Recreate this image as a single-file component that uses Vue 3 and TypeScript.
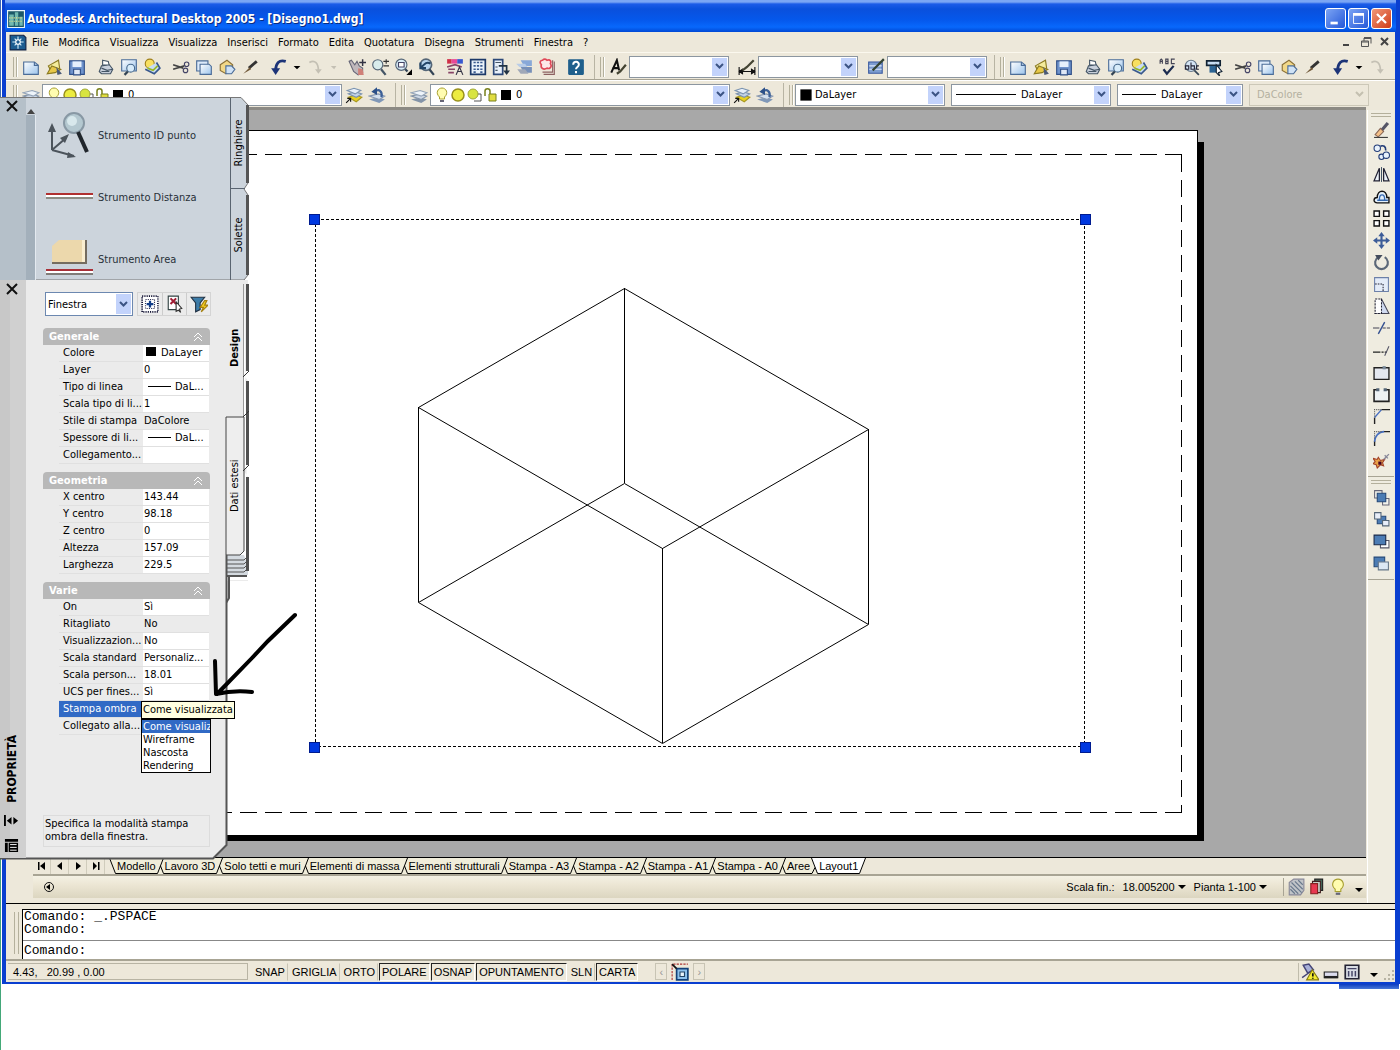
<script setup lang="ts">
import { h, ref } from 'vue'

const Icon = (p: { name: string }) =>
  h('svg', { class: 'icon', viewBox: '0 0 16 16', 'aria-hidden': 'true' }, [h('use', { href: '#i-' + p.name })])

const menus = ['File', 'Modifica', 'Visualizza', 'Visualizza', 'Inserisci', 'Formato', 'Edita', 'Quotatura', 'Disegna', 'Strumenti', 'Finestra', '?']

const standardGroups: string[][] = [
  ['new', 'open', 'save'],
  ['print', 'preview', 'publish'],
  ['cut', 'copy', 'paste', 'brush'],
  ['undo', 'more', 'redo', 'more-off'],
  ['pan', 'zoom', 'zoomwin', 'zoomprev'],
  ['props', 'center', 'palette', 'sheets', 'markup'],
  ['help'],
]
const secondGroups: string[][] = [
  ['new', 'open', 'save'],
  ['print', 'preview', 'publish'],
  ['spell', 'find', 'block'],
  ['cut', 'copy', 'paste', 'brush'],
  ['undo', 'more', 'redo'],
]
const styleBoxes = ['textstyle', 'dimstyle', 'tablestyle']
const layerStates = ['bulb', 'sun', 'sunvp', 'lock', 'swatch']

const modifyTools = ['erase', 'copyobj', 'mirror', 'offset', 'array', 'move', 'rotate', 'scale', 'stretch', 'trim', 'extend', 'breakpt', 'break', 'chamfer', 'fillet', 'explode']
const orderTools = ['order1', 'order2', 'order3', 'order4']

const sheetTabs = ['Modello', 'Lavoro 3D', 'Solo tetti e muri', 'Elementi di massa', 'Elementi strutturali', 'Stampa - A3', 'Stampa - A2', 'Stampa - A1', 'Stampa - A0', 'Aree', 'Layout1']
const activeSheet = ref('Layout1')

const modes = ref([
  { name: 'SNAP', on: false },
  { name: 'GRIGLIA', on: false },
  { name: 'ORTO', on: false },
  { name: 'POLARE', on: true },
  { name: 'OSNAP', on: true },
  { name: 'OPUNTAMENTO', on: true },
  { name: 'SLN', on: false },
  { name: 'CARTA', on: true },
])

interface Prop { name: string; value: string; mark?: 'swatch' | 'line'; locked?: boolean; active?: boolean }
const sections: { title: string; rows: Prop[] }[] = [
  {
    title: 'Generale',
    rows: [
      { name: 'Colore', value: 'DaLayer', mark: 'swatch' },
      { name: 'Layer', value: '0' },
      { name: 'Tipo di linea', value: 'DaL...', mark: 'line' },
      { name: 'Scala tipo di li...', value: '1' },
      { name: 'Stile di stampa', value: 'DaColore', locked: true },
      { name: 'Spessore di li...', value: 'DaL...', mark: 'line' },
      { name: 'Collegamento...', value: '' },
    ],
  },
  {
    title: 'Geometria',
    rows: [
      { name: 'X centro', value: '143.44' },
      { name: 'Y centro', value: '98.18' },
      { name: 'Z centro', value: '0' },
      { name: 'Altezza', value: '157.09' },
      { name: 'Larghezza', value: '229.5' },
    ],
  },
  {
    title: 'Varie',
    rows: [
      { name: 'On', value: 'Sì' },
      { name: 'Ritagliato', value: 'No', locked: true },
      { name: 'Visualizzazion...', value: 'No' },
      { name: 'Scala standard', value: 'Personaliz...' },
      { name: 'Scala person...', value: '18.01' },
      { name: 'UCS per fines...', value: 'Sì' },
      { name: 'Stampa ombra', value: '', active: true },
      { name: 'Collegato alla...', value: '', locked: true },
    ],
  },
]
const shadeOptions = ['Come visualizzata', 'Wireframe', 'Nascosta', 'Rendering']
const shade = ref('Come visualizzata')

const grips = [[314, 219], [1085, 219], [314, 747], [1085, 747]]
</script>

<template>
  <svg class="defs" width="0" height="0" aria-hidden="true">
    <defs>
      <linearGradient id="g-blue" x1="0" y1="0" x2="1" y2="1"><stop offset="0" stop-color="#fff" /><stop offset="1" stop-color="#9cc4ec" /></linearGradient>
      <symbol id="i-new" viewBox="0 0 16 16"><path d="M1.500 3.500h9.500l3.500 3v8h-13z" fill="url(#g-blue)" stroke="#4a6c98" /><path d="M11 3.500v3h3.500" fill="none" stroke="#4a6c98" /></symbol>
      <symbol id="i-open" viewBox="0 0 16 16"><path d="M3 7l9-5 1 7-7 4z" fill="#f4ec9c" stroke="#8b7a20" /><path d="M2 14l4-7 8 3-5 3z" fill="#e8c848" stroke="#8b7a20" /><path d="M10 8l5 6-4 1z" fill="#4a5a78" /></symbol>
      <symbol id="i-save" viewBox="0 0 16 16"><path d="M1.500 2.500h13v12h-13z" fill="#6f93cc" stroke="#2f4f88" /><path d="M4 3h8v5H4z" fill="#e6f0fc" /><path d="M5 10h6v5H5z" fill="#dfe8f6" stroke="#2f4f88" /></symbol>
      <symbol id="i-print" viewBox="0 0 16 16"><path d="M5 2l5 1 1 4-6-1z" fill="#fff" stroke="#456" /><path d="M4 7l7-1 3 4-2 4H4l-2-2z" fill="#c8d0dc" stroke="#456" /><path d="M4 9l5 2 5-1M4 12h7" fill="none" stroke="#456" /></symbol>
      <symbol id="i-preview" viewBox="0 0 16 16"><path d="M1.500 1.500h13v10h-13z" fill="url(#g-blue)" stroke="#4a6c98" /><circle cx="9.500" cy="9" r="3.500" fill="#d8ecfa" stroke="#48698c" /><path d="M7 12l-3 3" stroke="#345" stroke-width="2" /></symbol>
      <symbol id="i-publish" viewBox="0 0 16 16"><circle cx="6" cy="5" r="4" fill="#f8e060" stroke="#a08018" /><path d="M2 10l8 4 5-5-3-5" fill="#c8dcf4" stroke="#38588c" stroke-width="1.500" /><path d="M4 9l5 2 4-4" fill="none" stroke="#98b828" stroke-width="1.500" /></symbol>
      <symbol id="i-cut" viewBox="0 0 16 16"><path d="M1 6l9 3M1 10l10-3" stroke="#444" stroke-width="1.500" /><circle cx="13" cy="5.500" r="2" fill="none" stroke="#446" /><circle cx="12" cy="11" r="2" fill="none" stroke="#446" /></symbol>
      <symbol id="i-copy" viewBox="0 0 16 16"><path d="M1.500 2.500h10v9h-10z" fill="#dceafa" stroke="#4a6c98" /><path d="M4.500 5.500h8l2 2v7h-10z" fill="url(#g-blue)" stroke="#4a6c98" /></symbol>
      <symbol id="i-paste" viewBox="0 0 16 16"><path d="M2 6l6-4 5 4v6l-6 2-5-3z" fill="#f2d888" stroke="#8a7038" /><path d="M7 7h5l3 3-3 4H7z" fill="#cfe2f6" stroke="#4a6c98" /></symbol>
      <symbol id="i-brush" viewBox="0 0 16 16"><path d="M14 3L7 9" stroke="#333" stroke-width="2.500" /><path d="M8 8l1 2-7 4z" fill="#705838" /></symbol>
      <symbol id="i-undo" viewBox="0 0 16 16"><path d="M14 3C8 1 5 5 5 11" fill="none" stroke="#1c3478" stroke-width="2.400" /><path d="M1 9h8l-4 6z" fill="#1c3478" /></symbol>
      <symbol id="i-redo" viewBox="0 0 16 16"><path d="M3 4c5-3 8 1 8 7" fill="none" stroke="#c4c0b4" stroke-width="1.500" /><path d="M8 10h6l-3 4z" fill="#c4c0b4" /></symbol>
      <symbol id="i-more" viewBox="0 0 16 16"><path d="M5 7h6l-3 3z" /></symbol>
      <symbol id="i-more-off" viewBox="0 0 16 16"><path d="M6 7h5l-2 3z" fill="#c4c0b4" /></symbol>
      <symbol id="i-pan" viewBox="0 0 16 16"><path d="M1 3l2-1 3 4 2-3 2 4 3 2v4l-4 2-4-3z" fill="#c0b8bc" stroke="#667" /><path d="M9 9l4 1 1 5H9z" fill="#d08078" /><path d="M13 1v6M10 4h6" stroke="#334" stroke-width="1.300" /></symbol>
      <symbol id="i-zoom" viewBox="0 0 16 16"><circle cx="6" cy="6" r="4.500" fill="#d8ecec" stroke="#567" /><path d="M9 10l4 5" stroke="#456" stroke-width="2" /><path d="M11 3h5M13.500 1v4M11 7h5" stroke="#333" /></symbol>
      <symbol id="i-zoomwin" viewBox="0 0 16 16"><circle cx="6.500" cy="6" r="5" fill="#d8ecf8" stroke="#567" /><path d="M4 4h5v4H4z" fill="#fff" stroke="#446" /><path d="M10 10l2 2" stroke="#345" stroke-width="2" /><path d="M11 15h5v-5z" /></symbol>
      <symbol id="i-zoomprev" viewBox="0 0 16 16"><circle cx="8" cy="6" r="5" fill="#b8d4ec" stroke="#567" stroke-width="1.500" /><path d="M12 5c-3-2-5 0-8 3M3 4v5h5" fill="none" stroke="#246" stroke-width="1.800" /><path d="M11 10l4 5" stroke="#345" stroke-width="2" /></symbol>
      <symbol id="i-props" viewBox="0 0 16 16"><path d="M1 1h4v4H1z" fill="#d03048" /><path d="M5 1h5v4H5z" fill="#e84898" /><path d="M10 1h5v4h-5z" fill="#3858d0" /><path d="M1 8l7-2 6 2M2 10h6M2 13h5" fill="none" stroke="#846" stroke-width="1.500" /><path d="M9 15l3-7 3 7M10 12h4" fill="none" stroke="#334" /></symbol>
      <symbol id="i-center" viewBox="0 0 16 16"><path d="M1.500 1.500h13v13h-13z" fill="#eaf2fa" stroke="#1c3868" stroke-width="1.500" /><path d="M4 4h2M7 4h2M10 4h2M4 7h2M7 7h2M10 7h2M4 10h2M7 10h2M10 10h2M4 12.500h2M10 12.500h2" stroke="#3c5c90" stroke-width="1.500" /></symbol>
      <symbol id="i-palette" viewBox="0 0 16 16"><path d="M1.500 1.500h8v13h-8z" fill="#e8f0fa" stroke="#2c4878" stroke-width="1.500" /><path d="M3 4h5M3 8h2M3 11h2" stroke="#456" /><path d="M6 7h7v6" fill="none" stroke="#234" stroke-width="1.500" /><path d="M10 11h6l-3 4z" fill="#234" /></symbol>
      <symbol id="i-sheets" viewBox="0 0 16 16"><path d="M5 2h10v5H8z" fill="#88a8d8" /><path d="M1 5h8l2 3H4z" fill="#b8cce8" /><path d="M5 8h10v5H8z" fill="#7890b8" /><path d="M2 10h7l3 4H5z" fill="#a0a8b8" /></symbol>
      <symbol id="i-markup" viewBox="0 0 16 16"><path d="M5 14.500h9.500V3M13 2v10.500H4" fill="none" stroke="#8c6060" /><path d="M4 2c2-2 4 0 4 0 3-1 4 1 3 3 2 3-1 5-3 4-3 2-6 0-5-3-2-2-1-4 1-4z" fill="#fce8e8" stroke="#e04858" stroke-width="1.500" /></symbol>
      <symbol id="i-help" viewBox="0 0 16 16"><rect x="1" y="1" width="14" height="14" rx="1" fill="#1f5f8c" /><path d="M5.500 6c0-4 5.500-3 5 0 0 2-2.500 2-2.500 4M8 11.500v2" fill="none" stroke="#fff" stroke-width="1.800" /></symbol>
      <symbol id="i-textstyle" viewBox="0 0 16 16"><path d="M2 13L7 2l2 9M3 9h6" fill="none" stroke="#111" stroke-width="1.800" /><path d="M15 6l-5 6-3 2" fill="none" stroke="#443" stroke-width="2" /></symbol>
      <symbol id="i-dimstyle" viewBox="0 0 16 16"><path d="M1 8v7M15 8v7M1 12h14M1 12l3-2v4zM15 12l-3-2v4z" stroke="#111" /><path d="M14 2l-6 6-4 3" fill="none" stroke="#443" stroke-width="2" /></symbol>
      <symbol id="i-tablestyle" viewBox="0 0 16 16"><path d="M1.500 3.500h12v10h-12z" fill="#7c9cd0" stroke="#3858a0" /><path d="M2 7h11M2 10h11" stroke="#dce8fa" /><path d="M15 1L8 8l-3 3" fill="none" stroke="#343" stroke-width="2" /></symbol>
      <symbol id="i-spell" viewBox="0 0 16 16"><path d="M1 5V2l1-1 1 1v3M1 3h2M6 1h2v4H6zM6 3h2M14 1h-3v4h3" fill="none" stroke="#445" /><path d="M4 10l3 4 6-7" fill="none" stroke="#1c2c50" stroke-width="2" /></symbol>
      <symbol id="i-find" viewBox="0 0 16 16"><circle cx="8" cy="7" r="5" fill="#d4e4f4" stroke="#678" /><path d="M3 7h3v3H3zM8 4v6h3V7H8M15 7h-2v3h2" fill="none" stroke="#223" /><path d="M11 11l4 4" stroke="#345" stroke-width="1.500" /></symbol>
      <symbol id="i-block" viewBox="0 0 16 16"><path d="M1.500 2.500h12v4h-12z" fill="#c8ddf2" stroke="#123" stroke-width="1.500" /><path d="M4 7h9v6H4z" fill="#2c6494" /><path d="M10 6l5 6-3 1 1 3-3-3z" fill="#fff" stroke="#123" /></symbol>
      <symbol id="i-layers" viewBox="0 0 16 16"><path d="M1 12l8-2 6 2-5 3z" fill="#8494a8" /><path d="M1 9l8-2 6 2-5 3z" fill="#cdd8e6" stroke="#8494a8" /><path d="M1 6l8-2 6 2-5 3z" fill="#eef4fa" stroke="#94a4b8" /></symbol>
      <symbol id="i-layerset" viewBox="0 0 16 16"><path d="M3 10l6-2 6 2-5 4z" fill="#e8d020" stroke="#a89820" /><path d="M3 7l6-2 6 2-5 3z" fill="#c4d4e8" stroke="#7c94b0" /><path d="M2 4l6-2 6 2-5 3z" fill="#e8f0fa" stroke="#7c94b0" /><path d="M1 15l4-4M2 11h3v3" stroke="#111" fill="none" /></symbol>
      <symbol id="i-layerprev" viewBox="0 0 16 16"><path d="M1 12l8-2 6 2-5 3z" fill="#8098b8" /><path d="M1 9l8-2 6 2-5 3z" fill="#d4e0ee" stroke="#8898b0" /><path d="M12 10c1-5-2-8-6-5" fill="none" stroke="#3c6098" stroke-width="2" /><path d="M3 5l5-4v7z" fill="#2c5088" /></symbol>
      <symbol id="i-bulb" viewBox="0 0 16 16"><path d="M5.500 10C1 6 4 1 8 1s7 5 2.500 9v2h-5z" fill="#fffcb0" stroke="#a8a030" /><path d="M6 14h4" stroke="#667" stroke-width="2" /></symbol>
      <symbol id="i-sun" viewBox="0 0 16 16"><circle cx="8" cy="8" r="6" fill="#ecec40" stroke="#98901c" stroke-width="1.500" /></symbol>
      <symbol id="i-sunvp" viewBox="0 0 16 16"><path d="M9 7h6v7H8" fill="#fff" stroke="#555" /><circle cx="7" cy="7" r="5" fill="#d8e440" stroke="#a0a838" /></symbol>
      <symbol id="i-lock" viewBox="0 0 16 16"><path d="M3 9V4c0-3 5-3 5 0v4" fill="none" stroke="#78801c" stroke-width="1.500" /><path d="M7 7h7v7H7z" fill="#e0dc40" stroke="#78801c" /></symbol>
      <symbol id="i-swatch" viewBox="0 0 16 16"><path d="M3 3h10v10H3z" /></symbol>
      <symbol id="i-erase" viewBox="0 0 16 16"><path d="M14 1L8 8" stroke="#556" stroke-width="3" /><path d="M7 6l3 3-5 5-3-2z" fill="#f4c088" stroke="#865" /><path d="M1 14.500h13" stroke="#333" /></symbol>
      <symbol id="i-copyobj" viewBox="0 0 16 16"><g fill="#e8f2fc" stroke="#223c78"><circle cx="4" cy="4" r="3" /><circle cx="8" cy="12" r="2.500" /><circle cx="12.500" cy="10.500" r="3" /></g><path d="M7 2c3-1 5 0 5 4" fill="none" stroke="#223c78" stroke-width="1.500" /></symbol>
      <symbol id="i-mirror" viewBox="0 0 16 16"><path d="M6 2v12H1zM10 2v12h5z" fill="#eef4fa" stroke="#223" stroke-width="1.200" /><path d="M8 1v14" stroke="#456" /></symbol>
      <symbol id="i-offset" viewBox="0 0 16 16"><path d="M4 14C0 14 0 9 4 9c0-8 9-8 9 0h2v5z" fill="#e4f0fa" stroke="#111" stroke-width="1.300" /><path d="M4 11.500h10M6 11c0-6 5-6 5 0" fill="none" stroke="#3468b0" stroke-width="1.300" /></symbol>
      <symbol id="i-array" viewBox="0 0 16 16"><path d="M1 1h5v5H1zM10 1h5v5h-5zM1 10h5v5H1zM10 10h5v5h-5z" fill="#fff" stroke="#111" stroke-width="1.300" /></symbol>
      <symbol id="i-move" viewBox="0 0 16 16"><path d="M8 2v12M2 8h12" stroke="#3c5c98" stroke-width="2" /><path d="M8 0l3 4H5zM8 16l3-4H5zM0 8l4-3v6zM16 8l-4-3v6z" fill="#3c5c98" /></symbol>
      <symbol id="i-rotate" viewBox="0 0 16 16"><path d="M5 3a6 6 0 1 0 6 0" fill="none" stroke="#5c6878" stroke-width="2" /><path d="M2 1h7l-4 5z" fill="#444c5c" /></symbol>
      <symbol id="i-scale" viewBox="0 0 16 16"><path d="M1.500 1.500h13v13h-13z" fill="#e4ecf8" stroke="#6c80a8" /><path d="M2 7.500h7.500v7" fill="none" stroke="#223" stroke-dasharray="1.500 1" /></symbol>
      <symbol id="i-stretch" viewBox="0 0 16 16"><path d="M8 1l7 13.500H2z" fill="#d0daf0" stroke="#445" /><path d="M2 1h6v13.500H2z" fill="#fff" stroke="#223" stroke-dasharray="2 1" /></symbol>
      <symbol id="i-trim" viewBox="0 0 16 16"><path d="M0 7.500h6M9 7.500h3M13 7.500h3" stroke="#445" /><path d="M11 2L5 13" stroke="#345090" stroke-width="1.300" /></symbol>
      <symbol id="i-extend" viewBox="0 0 16 16"><path d="M0 9.500h7M8 9.500h2M11 9.500h2" stroke="#222" /><path d="M15 4l-4 9" stroke="#556" /></symbol>
      <symbol id="i-breakpt" viewBox="0 0 16 16"><path d="M1 3.500h14v11H1z" fill="#e4e8f0" stroke="#222" stroke-width="1.300" /><path d="M9 2h3v3H9z" fill="#789" /></symbol>
      <symbol id="i-break" viewBox="0 0 16 16"><path d="M4 3.500H1v11h14v-11h-3" fill="#eef2f4" stroke="#222" stroke-width="1.500" /><path d="M3 2h3v3H3zM10 2h3v3h-3z" fill="#567" /></symbol>
      <symbol id="i-chamfer" viewBox="0 0 16 16"><path d="M1.500 15V9M8 1.500h8" stroke="#222" stroke-width="1.300" /><path d="M1.500 9L8 1.500" stroke="#4870c0" stroke-width="1.300" /><path d="M1.500 8V1.500H8" fill="none" stroke="#555" stroke-dasharray="1 1" /></symbol>
      <symbol id="i-fillet" viewBox="0 0 16 16"><path d="M1.500 15v-5M10 1.500h6" stroke="#222" stroke-width="1.300" /><path d="M1.500 11c0-5 4-9.500 9-9.500" fill="none" stroke="#4870c0" stroke-width="1.500" /><path d="M1.500 8V1.500H8" fill="none" stroke="#555" stroke-dasharray="1 1" /></symbol>
      <symbol id="i-explode" viewBox="0 0 16 16"><path d="M0 6l4 1 1-2 2 3 4-1-2 3 1 3-3-1-3 3-1-3-3-1 2-2z" fill="#e8a048" stroke="#a04028" /><path d="M10 7l5-5M11 3l3 3" stroke="#889" stroke-width="1.300" /><path d="M5 9h3v3H5z" fill="#402" /></symbol>
      <symbol id="i-order1" viewBox="0 0 16 16"><path d="M1.500 1.500h7v7h-7zM9 9h6v6H9z" fill="#f4f4ec" stroke="#667" /><path d="M4 4h8v8H4z" fill="#4c7cb4" stroke="#244878" /></symbol>
      <symbol id="i-order2" viewBox="0 0 16 16"><path d="M4 5h8v7H4z" fill="#4c7cb4" stroke="#244878" /><path d="M1.500 1.500h6v6h-6zM9 9h6v5H9z" fill="#e8eef8" stroke="#567" /></symbol>
      <symbol id="i-order3" viewBox="0 0 16 16"><path d="M7 7h8v7H7z" fill="#fff" stroke="#556" /><path d="M1 2h11v9H1z" fill="#4c7cb4" stroke="#182848" /></symbol>
      <symbol id="i-order4" viewBox="0 0 16 16"><path d="M1 2h10v9H1z" fill="#4c7cb4" stroke="#244878" /><path d="M5 6.500h9.500v7.500H5z" fill="#dce8f4" stroke="#678" /></symbol>
      <symbol id="i-app" viewBox="0 0 16 16"><path d="M.5.500h15v15H.5z" fill="#1c5868" stroke="#e8f4f8" /><path d="M2 4h4v10H2zM7 2h3v12H7zM11 6h3v8h-3z" fill="#70b8b0" /><path d="M2 7h12M2 10h12" stroke="#e8e088" stroke-dasharray="1 1" /></symbol>
      <symbol id="i-doc" viewBox="0 0 16 16"><path d="M1 2h12l2 2v11H1z" fill="#1c5c90" stroke="#124" /><path d="M8 3v11M3 8h10M5 5l6 6M11 5l-6 6" stroke="#d8f0fc" /><circle cx="8" cy="8" r="2" fill="#1c5c90" stroke="#fff" /></symbol>
      <symbol id="i-gradient" viewBox="0 0 16 16"><path d="M2 4l4-3h9v10l-3 4H2z" fill="#c0c4c8" stroke="#889" /><path d="M4 4l9 9M3 7l7 7M7 3l7 7M3 10l4 4M10 2l4 4" stroke="#68788c" /></symbol>
      <symbol id="i-redbox" viewBox="0 0 16 16"><path d="M6 1h7v10H6z" fill="#486858" stroke="#222" /><path d="M4 3h7v10H4z" fill="#c8d0c8" stroke="#422" /><path d="M2.500 5h6v9h-6z" fill="#e83850" stroke="#822" /></symbol>
      <symbol id="i-maxview" viewBox="0 0 16 16"><path d="M1 15V1h14" fill="none" stroke="#a33" stroke-dasharray="2 1" /><path d="M5 5h10v10H5z" fill="#8cc0ec" stroke="#124078" stroke-width="1.500" /><path d="M8 8h4v4H8z" fill="#e8f4fc" stroke="#246" /><path d="M1 1l4 4" stroke="#111" stroke-width="1.500" /></symbol>
      <symbol id="i-comm" viewBox="0 0 16 16"><path d="M2 2l5-1 4 5-5 3zM1 13l7-5" fill="#a8b0d8" stroke="#447" stroke-width="1.300" /><path d="M10 6l6 9H5z" fill="#f4ec30" stroke="#887c10" /><path d="M10.500 9v3M10.500 13v1" stroke="#111" stroke-width="1.500" /></symbol>
      <symbol id="i-tray" viewBox="0 0 16 16"><path d="M2 8h12v5H2z" fill="#dde" stroke="#222" /><path d="M2 12.500h12" stroke="#222" stroke-width="2" /></symbol>
      <symbol id="i-calc" viewBox="0 0 16 16"><path d="M2 2h12v12H2z" fill="#d8dce4" stroke="#223" stroke-width="1.500" /><path d="M4 5h8M5 7v5M8 7v5M11 7v5" stroke="#446" stroke-width="1.300" /></symbol>
      <symbol id="i-pick" viewBox="0 0 16 16"><path d="M1 1h14v14H1z" fill="#fff" stroke="#113" stroke-width="1.500" stroke-dasharray="1 1" /><path d="M4 4h8v8H4z" fill="none" stroke="#335" stroke-dasharray="1 1" /><path d="M8 5v6M5 8h6" stroke="#113c88" stroke-width="2" /></symbol>
      <symbol id="i-select" viewBox="0 0 16 16"><path d="M2 1h9v12H2z" fill="#fff" stroke="#344" /><path d="M4 3l5 5M9 3L4 8" stroke="#a01c34" stroke-width="1.800" /><path d="M9 6l5 6-2 .5 1 3-2-2-2 1z" fill="#fff" stroke="#333" /></symbol>
      <symbol id="i-filter" viewBox="0 0 16 16"><path d="M1 2h12L9 7v6l-4 2V7z" fill="#3c7ca8" stroke="#234" /><path d="M13 5l-4 6h3l-2 4 6-6h-3l2-4z" fill="#f8d020" stroke="#a48010" /></symbol>
    </defs>
  </svg>

  <div class="desktop">
    <main class="window">
      <header class="title-bar">
        <Icon name="app" />
        <h1>Autodesk Architectural Desktop 2005 - [Disegno1.dwg]</h1>
        <button class="win-btn" aria-label="Riduci a icona"><svg viewBox="0 0 21 21"><path d="M5 14h8v3H5z" fill="#fff" /></svg></button>
        <button class="win-btn" aria-label="Ingrandisci"><svg viewBox="0 0 21 21"><path d="M5 5h11v11H5z" fill="none" stroke="#fff" /><path d="M4.500 4.500h12v3h-12z" fill="#fff" /></svg></button>
        <button class="win-btn close" aria-label="Chiudi"><svg viewBox="0 0 21 21"><path d="M5.500 5.500l10 10M15.500 5.500l-10 10" stroke="#fff" stroke-width="2.500" /></svg></button>
      </header>

      <nav class="menu-bar">
        <Icon name="doc" />
        <button v-for="(m, i) in menus" :key="i">{{ m }}</button>
        <span class="grow"></span>
        <button class="mdi" aria-label="Riduci disegno"><svg viewBox="0 0 12 12"><path d="M2 9h6" stroke="#444" stroke-width="2" /></svg></button>
        <button class="mdi" aria-label="Ripristina disegno"><svg viewBox="0 0 12 12"><path d="M4 1.500h7v6M1.500 5h7v5.500h-7zM4 2.500h7M1.500 6h7M4 2v3" fill="none" stroke="#555" /></svg></button>
        <button class="mdi" aria-label="Chiudi disegno"><svg viewBox="0 0 12 12"><path d="M2 2l7 7M9 2L2 9" stroke="#444" stroke-width="2" /></svg></button>
      </nav>

      <div class="toolbar first">
        <span class="grip"></span>
        <div v-for="(g, gi) in standardGroups" :key="gi" class="group">
          <button v-for="t in g" :key="t" class="tool" :class="{ narrow: t.startsWith('more') }" :aria-label="t"><Icon :name="t" /></button>
        </div>
        <span class="end"></span>
        <span class="grip"></span>
        <div v-for="s in styleBoxes" :key="s" class="style-box">
          <button class="tool" :aria-label="s"><Icon :name="s" /></button>
          <label class="combo"><select :aria-label="s"><option></option></select><span class="drop"><svg viewBox="0 0 9 9"><path d="M1 2l3.500 3.500L8 2" /></svg></span></label>
        </div>
        <span class="end"></span>
        <span class="grip"></span>
        <div v-for="(g, gi) in secondGroups" :key="'b' + gi" class="group">
          <button v-for="t in g" :key="t" class="tool" :class="{ narrow: t.startsWith('more') }" :aria-label="t"><Icon :name="t" /></button>
        </div>
      </div>

      <div class="toolbar second">
        <template v-for="n in 2" :key="n">
          <span class="grip"></span>
          <button class="tool" aria-label="Gestore proprietà layer"><Icon name="layers" /></button>
          <label class="combo layer-combo">
            <Icon v-for="s in layerStates" :key="s" :name="s" />
            <select aria-label="Layer corrente"><option>0</option></select>
            <span class="drop"><svg viewBox="0 0 9 9"><path d="M1 2l3.500 3.500L8 2" /></svg></span>
          </label>
          <button class="tool" aria-label="Rendi layer corrente"><Icon name="layerset" /></button>
          <button class="tool" aria-label="Layer precedente"><Icon name="layerprev" /></button>
          <span class="end"></span>
        </template>
        <span class="grip"></span>
        <label class="combo color"><Icon name="swatch" /><select aria-label="Colore"><option>DaLayer</option></select><span class="drop"><svg viewBox="0 0 9 9"><path d="M1 2l3.500 3.500L8 2" /></svg></span></label>
        <label class="combo ltype"><i class="sample"></i><select aria-label="Tipo di linea"><option>DaLayer</option></select><span class="drop"><svg viewBox="0 0 9 9"><path d="M1 2l3.500 3.500L8 2" /></svg></span></label>
        <label class="combo lweight"><i class="sample short"></i><select aria-label="Spessore di linea"><option>DaLayer</option></select><span class="drop"><svg viewBox="0 0 9 9"><path d="M1 2l3.500 3.500L8 2" /></svg></span></label>
        <label class="combo off"><select aria-label="Stile di stampa" disabled><option>DaColore</option></select><span class="drop"><svg viewBox="0 0 9 9"><path d="M1 2l3.500 3.500L8 2" /></svg></span></label>
      </div>

      <div class="work">
        <div class="document">
          <svg class="canvas" role="img" aria-label="Layout1">
            <g transform="translate(-33 -110)" shape-rendering="crispEdges">
              <path d="M60 142h1144v699H60z" />
              <path d="M40 130.500h1157.500v704.500H40z" fill="#fff" stroke="#000" />
              <path d="M1181.500 154.500H60M1181.500 812.500H60M1181.500 154.500v658" fill="none" stroke="#000" stroke-dasharray="17 8" />
              <path d="M315.500 219.500h769v527h-769z" fill="none" stroke="#000" stroke-dasharray="3 2" />
              <g fill="none" stroke="#000">
                <path d="M624.500 288.500L418.500 407.500L662.500 548.500L868.500 429.500z" shape-rendering="auto" />
                <path d="M624.500 483.500L418.500 602.500L662.500 743.500L868.500 624.500z" shape-rendering="auto" />
                <path d="M624.500 288v195M418.500 407v195M662.500 548v195M868.500 429v195" />
              </g>
              <rect v-for="(g, i) in grips" :key="i" :x="g[0] - 5" :y="g[1] - 5" width="10" height="10" fill="#0038e0" stroke="#001c90" />
            </g>
          </svg>

          <div class="sheet-bar">
            <div class="sheet-nav">
              <button aria-label="Primo"><svg viewBox="0 0 10 10"><path d="M1 1h1.500v8H1zM8 1v8L3 5z" /></svg></button>
              <button aria-label="Precedente"><svg viewBox="0 0 10 10"><path d="M7 1v8L2 5z" /></svg></button>
              <button aria-label="Successivo"><svg viewBox="0 0 10 10"><path d="M3 1v8l5-4z" /></svg></button>
              <button aria-label="Ultimo"><svg viewBox="0 0 10 10"><path d="M7 1h1.500v8H7zM2 1v8l4-4z" /></svg></button>
            </div>
            <svg class="slash" viewBox="0 0 9 16"><path d="M1.500 0l6 15.500H9V0z" class="fill" /><path d="M1.500 0l6 15.500H9" /></svg>
            <template v-for="t in sheetTabs" :key="t">
              <button class="sheet" :class="{ active: t === activeSheet }" @click="activeSheet = t">{{ t }}</button>
              <svg v-if="t === 'Aree'" class="slash" viewBox="0 0 9 16"><path d="M1.500 0l6 15.500H9V0z" class="fill white" /><path d="M1.500 0l6 15.500H9M0 15.500h2l3-6" /></svg>
              <svg v-else class="slash" viewBox="0 0 9 16"><path v-if="t === 'Layout1'" d="M0 0v15.500h1.500L7.500 0z" class="fill white" /><path d="M0 15.500h1.500L7.500 0" /><path v-if="t !== 'Layout1'" d="M4.500 8l3 7.500H9" /></svg>
            </template>
          </div>

          <div class="view-bar">
            <button class="round" aria-label="Apri menu disegno"><svg viewBox="0 0 12 12"><circle cx="6" cy="6" r="4.500" fill="none" stroke="#111" /><path d="M7 3v6L3 6z" /></svg></button>
            <span class="grow"></span>
            <span>Scala fin.:</span>
            <button class="pull">18.005200<i></i></button>
            <button class="pull">Pianta 1-100<i></i></button>
            <div class="view-icons">
              <Icon name="gradient" /><Icon name="redbox" /><Icon name="bulb" />
            </div>
            <button class="pull last" aria-label="Altro"><i></i></button>
          </div>
        </div>

        <aside class="side-tools">
          <span class="hgrip"></span>
          <button v-for="t in modifyTools" :key="t" class="side-tool" :aria-label="t"><Icon :name="t" /></button>
          <hr />
          <span class="hgrip"></span>
          <button v-for="t in orderTools" :key="t" class="side-tool" :aria-label="t"><Icon :name="t" /></button>
          <hr />
        </aside>
      </div>

      <section class="command">
        <span class="cmd-grip"></span>
        <div class="cmd-text">
          <pre>Comando: _.PSPACE
Comando:</pre>
          <label>Comando:<input type="text" aria-label="Riga di comando" /></label>
        </div>
      </section>

      <footer class="status">
        <div class="coords">4.43,&nbsp;&nbsp; 20.99 , 0.00</div>
        <button v-for="m in modes" :key="m.name" class="mode" :class="{ on: m.on }" @click="m.on = !m.on">{{ m.name }}</button>
        <div class="vp">
          <button aria-label="Finestra precedente">‹</button>
          <Icon name="maxview" />
          <button aria-label="Finestra successiva">›</button>
        </div>
        <span class="grow"></span>
        <div class="tray"><Icon name="comm" /><Icon name="tray" /><Icon name="calc" /></div>
        <button class="pull last" aria-label="Menu barra di stato"><i></i></button>
        <svg class="size-grip" viewBox="0 0 12 12"><path d="M9 1h2v2H9zM9 5h2v2H9zM9 9h2v2H9zM5 5h2v2H5zM5 9h2v2H5zM1 9h2v2H1z" fill="#b8b4a4" /></svg>
      </footer>
    </main>

    <div class="corner"></div>

    <svg class="arrow" viewBox="0 0 90 90" aria-hidden="true"><path d="M85 5L58 31L42 48L7 84M5 51L6 84M6 84Q24 80 42 82" /></svg>

    <div class="palettes">
      <svg class="shape" viewBox="0 0 252 766" aria-hidden="true">
        <path d="M0 .500H241L248 8V86L244 92L248 98V178L244 183H0z" fill="#ccd4dc" stroke="#777" />
        <path d="M0 1h26v182H0z" fill="#b5c0c9" />
        <path d="M26 18h9v165h-9z" fill="#a3b0bb" />
        <path d="M35 18h1v165h-1z" fill="#e4eaf0" />
        <path d="M230.500 1v182M230 91.500h15" stroke="#596470" fill="none" />
        <path d="M247.500 8v78M247.500 98v80" stroke="#555" stroke-width="3" fill="none" />
        <path d="M244 183h4V272l-4 6 4 6v84l-4 6 4 6v104H226V500l4 3v-20h18v-10" fill="#ebebeb" />
        <path d="M226 478h22v-8l-4-12h-18z" fill="#d4dae0" />
        <path d="M226 463h18l4-4M226 467h18l4-4M226 471h18l4-4M226 475h18l4-4" stroke="#555" fill="none" />
        <path d="M226 479h21" stroke="#555" stroke-width="2" />
        <path d="M229 480v21l-3 5" stroke="#555" stroke-width="2" fill="none" />
        <path d="M0 183H244V320H226V748L213 762H0z" fill="#ebebeb" />
        <path d="M226 320h18v134l-4 4h-14z" fill="#eee" stroke="#444" />
        <path d="M247.500 187v87M247.500 284v84M247.500 380v94" stroke="#505050" stroke-width="3" fill="none" />
        <path d="M243.500 187v133" stroke="#999" fill="none" />
        <path d="M243 320l6-6M243 280l6-6M243 374l6-6" stroke="#333" fill="none" />
        <path d="M226.500 458V748L213 761.500H0" stroke="#555" stroke-width="2" fill="none" />
        <path d="M0 183h26v578H0z" fill="#d0d0d0" />
        <path d="M0 183h10v578H0z" fill="#c8c8c8" />
      </svg>

      <section class="tool-palette">
        <div class="strip">
          <button class="x" aria-label="Chiudi tavolozza"><svg viewBox="0 0 12 12"><path d="M1 1l10 10M11 1L1 11" /></svg></button>
          <svg class="up" viewBox="0 0 10 6"><path d="M1 6l4-5 4 5z" fill="#444" /></svg>
        </div>
        <ul class="tools-list">
          <li>
            <svg viewBox="0 0 50 50"><path d="M8 40V17M8 40l14-12M8 40l22 6" stroke="#4c545c" stroke-width="2" fill="none" /><path d="M4 22l4-9 4 9zM16 28l9-4-4 9zM24 42l8 5-9 1z" fill="#4c545c" /><circle cx="30" cy="13" r="10" fill="#b4c8d0" stroke="#8898a4" stroke-width="2" /><circle cx="28" cy="11" r="5" fill="#d8e8ec" /><path d="M34 22l9 20" stroke="#20262c" stroke-width="4" /></svg>
            <span>Strumento ID punto</span>
          </li>
          <li>
            <svg viewBox="0 0 50 50"><path d="M2 22h47" stroke="#b03030" stroke-width="2" /><path d="M2 24h47" stroke="#fff" stroke-width="2" /><path d="M2 26h47" stroke="#8c8c84" stroke-width="2" /></svg>
            <span>Strumento Distanza</span>
          </li>
          <li>
            <svg viewBox="0 0 50 50"><path d="M8 12l7-6h28v23H8z" fill="#ecd8ac" /><path d="M38 6h3v23h-3z" fill="#faeed0" /><path d="M42 6v23H8" fill="none" stroke="#746c60" stroke-width="2" /><path d="M2 36h47" stroke="#a83038" stroke-width="2" /><path d="M2 38h47" stroke="#fff" stroke-width="2" /><path d="M2 40h47" stroke="#807c78" stroke-width="2" /></svg>
            <span>Strumento Area</span>
          </li>
        </ul>
        <div class="vtabs"><button>Ringhiere</button><button>Solette</button></div>
      </section>

      <section class="properties">
        <div class="strip">
          <button class="x" aria-label="Chiudi proprietà"><svg viewBox="0 0 12 12"><path d="M1 1l10 10M11 1L1 11" /></svg></button>
          <span class="grow"></span>
          <h2>PROPRIETÀ</h2>
          <button aria-label="Nascondi automaticamente"><svg viewBox="0 0 16 12"><path d="M0 0h2v12H0zM3 6l5-4v8zM10 2v8l5-4z" /></svg></button>
          <button aria-label="Menu proprietà"><svg viewBox="0 0 16 16"><path d="M1 1h14v3H1zM1 5h3v10H1zM5 5h10v10H5z" /><path d="M6.500 7h7M6.500 10h7M6.500 13h7" stroke="#fff" /></svg></button>
        </div>
        <div class="body">
          <div class="pick">
            <label class="combo"><select aria-label="Oggetto selezionato"><option>Finestra</option></select><span class="drop"><svg viewBox="0 0 9 9"><path d="M1 2l3.500 3.500L8 2" /></svg></span></label>
            <div class="pick-tools">
              <button aria-label="Attiva PICKADD"><Icon name="pick" /></button>
              <button aria-label="Seleziona oggetti"><Icon name="select" /></button>
              <button aria-label="Selezione rapida"><Icon name="filter" /></button>
            </div>
          </div>
          <div v-for="s in sections" :key="s.title" class="section">
            <h3>{{ s.title }}<svg viewBox="0 0 12 12"><path d="M2 6l4-4 4 4M2 10l4-4 4 4" /></svg></h3>
            <table>
              <tbody>
                <tr v-for="r in s.rows" :key="r.name" :class="{ active: r.active, locked: r.locked }">
                  <th scope="row">{{ r.name }}</th>
                  <td><i v-if="r.mark" :class="r.mark"></i>{{ r.value }}
                    <div v-if="r.active" class="pop">
                      <span class="tip">{{ shade }}</span>
                      <ul><li v-for="o in shadeOptions" :key="o" :class="{ sel: o === shade }">{{ o }}</li></ul>
                    </div>
                  </td>
                </tr>
              </tbody>
            </table>
          </div>
          <span class="grow"></span>
          <p class="hint">Specifica la modalità stampa ombra della finestra.</p>
        </div>
        <div class="vtabs"><button class="current">Design</button><button class="inner">Dati estesi</button></div>
      </section>
    </div>
  </div>
</template>

<style>
body { margin: 0; background: #fff; }
</style>

<style scoped>
.desktop { position: relative; min-height: 100vh; box-sizing: border-box; padding-bottom: 66px; font: 11px/13px "DejaVu Sans Condensed", "DejaVu Sans", sans-serif; color: #000; background: linear-gradient(#3c64b4, #4a7) left / 1px 100% no-repeat #fff; display: flex; flex-direction: column; }
.defs { position: absolute; }
button, select, input { font: inherit; color: inherit; background: none; border: 0; padding: 0; margin: 0; border-radius: 0; }
h1, h2, h3, ul, p, pre { margin: 0; padding: 0; font: inherit; list-style: none; }
.icon { width: 18px; height: 18px; flex: none; display: block; }
.grow { flex: 1; }

.window { flex: 1; display: flex; flex-direction: column; border: solid #0a3fd0; border-width: 0 5px 2px 4px; margin-left: 2px; background: #ede8da; }
.title-bar { height: 32px; flex: none; box-sizing: border-box; padding: 5px 4px 0 2px; display: flex; align-items: center; gap: 2px; margin: 0 -1px; background: linear-gradient(#7ba6f4 0, #7ba6f4 2px, #1c5ce8 4px, #0a50dc 9px, #0558ec 20px, #0868fc 27px, #0048d4 32px); }
.title-bar h1 { flex: 1; font: bold 12px/20px "DejaVu Sans Condensed", sans-serif; color: #fff; text-shadow: 1px 1px #0a2c80; white-space: nowrap; }
.win-btn { width: 21px; height: 21px; border: 1px solid #fff; border-radius: 3px; background: linear-gradient(135deg, #7ca4f4, #2458d8); box-sizing: border-box; }
.win-btn svg { display: block; width: 19px; height: 19px; }
.win-btn.close { background: linear-gradient(135deg, #f09878, #d03c18); }

.menu-bar { height: 20px; flex: none; display: flex; align-items: center; padding-left: 3px; }
.menu-bar button { padding: 0 5px; height: 20px; }
.menu-bar .mdi { width: 19px; padding: 0 3px; }
.mdi svg { width: 12px; height: 12px; display: block; }

.toolbar { display: flex; align-items: center; flex: none; overflow: hidden; box-sizing: border-box; padding-left: 2px; }
.first { height: 28px; border-top: 1px solid #fbf8ee; border-bottom: 1px solid #a8a494; padding-top: 1px; }
.second { height: 27px; border-top: 1px solid #fff; padding-top: 1px; }
.tool { width: 23px; height: 24px; display: flex; align-items: center; justify-content: center; flex: none; }
.tool.narrow { width: 13px; }
.group { display: flex; flex: none; }
.group + .group { margin-left: 6px; }
.grip { width: 4px; height: 20px; margin: 0 2px 0 5px; box-sizing: border-box; border: solid #b4b09c; border-width: 0 1px; box-shadow: 1px 0 #fff; flex: none; }
.end { width: 1px; height: 24px; margin-left: 7px; background: #b8b4a4; flex: none; }
.style-box { display: flex; align-items: center; flex: none; }
.style-box + .style-box { margin-left: 6px; }
.style-box .combo { width: 100px; }
.combo { display: flex; align-items: center; box-sizing: border-box; height: 22px; border: 1px solid #8c96a0; background: #fff; padding: 1px; flex: none; }
.combo select { flex: 1; min-width: 0; width: 0; appearance: none; outline: 0; padding-left: 2px; opacity: 1; }
.drop { width: 15px; align-self: stretch; background: #c3d3fb; display: flex; align-items: center; justify-content: center; flex: none; pointer-events: none; }
.drop svg { width: 9px; height: 9px; }
.drop path { fill: none; stroke: #3c5484; stroke-width: 2; }
.layer-combo { width: 300px; padding-left: 3px; }
.layer-combo .icon { width: 16px; height: 16px; }
.second .color { width: 150px; }
.color select { padding-left: 0; }
.second .ltype { width: 160px; margin-left: 6px; }
.second .lweight { width: 126px; margin-left: 6px; }
.second .off { flex: 0 1 120px; margin-left: 6px; padding-left: 5px; border-color: #ccc8b8; background: #ede8da; }
.off select { color: #b4b0a0; }
.off .drop { background: none; }
.off .drop path { stroke: #c4c0b0; }
.sample { width: 60px; height: 1px; margin: 0 3px; background: #000; flex: none; }
.sample.short { width: 34px; }

.work { flex: 1; display: flex; min-height: 0; }
.document { flex: 1; min-width: 0; display: flex; flex-direction: column; margin-left: 27px; }
.canvas { flex: 1; display: block; width: 100%; min-height: 0; background: #a8a8a8; border-top: 3px solid #8c8a84; box-sizing: border-box; overflow: hidden; }
.side-tools { width: 26px; margin: 3px 1px 0 1px; flex: none; border-left: 1px solid #fff; display: flex; flex-direction: column; align-items: center; background: #efece0; }
.side-tool { height: 22px; display: flex; align-items: center; flex: none; }
.side-tool .icon { width: 17px; height: 17px; }
.hgrip { width: 20px; height: 4px; margin: 3px 0 2px; box-sizing: border-box; border: solid #b4b09c; border-width: 1px 0; flex: none; }
.side-tools hr { width: 100%; height: 1px; border: 0; margin: 5px 0 0; background: #a8a494; flex: none; }

.sheet-bar { height: 16px; flex: none; display: flex; border-top: 1px solid #000; font: 11px/14px "Liberation Sans", Arial, sans-serif; }
.sheet-nav { display: flex; padding-right: 3px; }
.sheet-nav button { width: 18px; display: flex; align-items: center; justify-content: center; border-right: 1px solid #d0ccbc; box-sizing: border-box; }
.sheet-nav svg { width: 10px; height: 10px; }
.slash { width: 9px; height: 16px; flex: none; background: #f0edda; }
.slash:first-of-type, .slash:last-child { background: none; }
.slash path { fill: none; stroke: #000; }
.slash .fill { fill: #f0edda; stroke: none; }
.slash .white { fill: #fff; }
.sheet { height: 16px; background: #f0edda; border-bottom: 1px solid #000; box-sizing: border-box; white-space: nowrap; flex: none; }
.sheet.active { background: #fff; }
.view-bar { height: 24px; box-sizing: border-box; flex: none; border-top: 2px solid #a8a494; margin-bottom: 5px; display: flex; align-items: center; background: linear-gradient(#f4f1e4, #ece6d4 40%, #dcd6c0); font: 11px/14px "Liberation Sans", Arial, sans-serif; }
.round { margin-left: 10px; }
.round svg { width: 12px; height: 12px; display: block; }
.pull { display: flex; align-items: center; gap: 3px; margin-left: 8px; white-space: nowrap; }
.pull i { border: 4px solid transparent; border-top-color: #000; border-bottom: 0; }
.view-icons { display: flex; gap: 3px; margin-left: 16px; padding: 0 0 0 3px; border-left: 1px solid #a8a494; }
.pull.last { margin: 6px 3px 0 8px; }

.command { display: flex; flex: none; border-top: 1px solid #000; border-bottom: 2px solid #a8a494; padding: 5px 0 0 0; font: 13px/13px "Liberation Mono", "Courier New", monospace; }
.cmd-grip { width: 3px; margin: 3px 3px 5px 8px; border: solid #b4b09c; border-width: 0 1px; }
.cmd-text { flex: 1; border-top: 1px solid #000; border-left: 1px solid #000; background: #fff; }
.cmd-text pre { height: 30px; padding-left: 1px; font: inherit; border-bottom: 1px solid #888; }
.cmd-text label { display: flex; height: 18px; padding-left: 1px; align-items: center; }
.cmd-text input { flex: 1; outline: 0; height: 15px; }

.status { flex: none; height: 21px; display: flex; align-items: center; font: 11px/14px "Liberation Sans", Arial, sans-serif; padding: 1px 0; box-sizing: border-box; }
.coords { width: 240px; height: 17px; line-height: 17px; box-sizing: border-box; padding-left: 5px; border: 1px solid #b8b4a4; border-left: 0; margin: 0 4px 0 2px; }
.mode { height: 18px; padding: 1px 2px 0; margin-right: 1px; border: 1px solid transparent; border-right-color: #c8c4b4; box-sizing: border-box; }
.mode.on { border-color: #222 #fff #fff #222; }
.vp { display: flex; align-items: center; gap: 4px; margin-left: 16px; }
.vp button { width: 12px; height: 17px; border: 1px solid #c8c4b4; color: #999; }
.tray { display: flex; gap: 3px; margin-right: 1px; border-left: 1px solid #c0bcac; padding-left: 2px; }
.size-grip { width: 12px; height: 12px; align-self: flex-end; margin-left: 2px; }
.corner { position: absolute; right: 1px; bottom: 61px; width: 60px; height: 5px; background: linear-gradient(#0c3cc0, #4878d8); }
.arrow { position: absolute; left: 210px; top: 610px; width: 90px; height: 90px; z-index: 3; }
.arrow path { fill: none; stroke: #000; stroke-width: 4; stroke-linecap: round; }

.palettes { position: absolute; left: 0; top: 97px; width: 252px; z-index: 2; }
.shape { position: absolute; left: 0; top: 0; width: 252px; height: 766px; }
.tool-palette, .properties { position: relative; display: flex; }
.tool-palette { height: 183px; }
.properties { height: 579px; }
.strip { width: 37px; flex: none; display: flex; align-items: flex-start; }
.strip button { display: block; }
.strip .x { padding: 3px 0 0 6px; }
.x svg { width: 12px; height: 12px; display: block; }
.x path { stroke: #111; stroke-width: 2; fill: none; }
.up { width: 10px; height: 6px; margin: 11px 0 0 8px; }
.tools-list { width: 193px; flex: none; display: flex; flex-direction: column; gap: 12px; padding: 13px 0 0 7px; box-sizing: border-box; }
.tools-list li { display: flex; align-items: center; gap: 4px; color: #283038; }
.tools-list svg { width: 50px; height: 50px; }
.vtabs { display: flex; flex-direction: column; }
.vtabs button { writing-mode: vertical-rl; transform: rotate(180deg); width: 17px; line-height: 17px; height: 92px; text-align: center; }
.properties .vtabs { width: 24px; }
.properties .vtabs .current { font-weight: bold; height: 136px; width: 20px; line-height: 20px; }
.properties .vtabs .inner { height: 140px; width: 20px; line-height: 20px; }
.properties .strip { flex-direction: column; width: 25px; padding-bottom: 6px; box-sizing: border-box; }
.strip h2 { writing-mode: vertical-rl; transform: rotate(180deg); font: bold 12px/14px "DejaVu Sans Condensed", sans-serif; margin: 0 0 12px 5px; }
.strip h2 ~ button { margin: 0 0 12px 4px; }
.strip h2 ~ button svg { width: 15px; display: block; }
.strip h2 ~ button:last-child { margin-bottom: 0; }
.properties .body { width: 200px; display: flex; flex-direction: column; box-sizing: border-box; padding: 12px 15px 12px 18px; }
.pick { display: flex; justify-content: space-between; margin-bottom: 12px; }
.pick .combo { width: 88px; height: 24px; margin-left: 2px; border-color: #6c88b0; }
.pick select { padding-left: 1px; }
.pick-tools { display: flex; border: 1px solid #d4d4d4; margin-right: -1px; }
.pick-tools button { width: 24px; height: 22px; display: flex; align-items: center; justify-content: center; }
.pick-tools button + button { border-left: 1px solid #ccc; }
.section { margin-bottom: 8px; }
.section h3 { height: 17px; line-height: 18px; padding: 0 6px; font-weight: bold; color: #fff; background: #b8b8b8; border-radius: 4px 4px 0 0; display: flex; justify-content: space-between; align-items: center; }
.section h3 svg { width: 12px; height: 12px; }
.section h3 path { fill: none; stroke: #fff; stroke-width: 1; }
table { width: 150px; margin-left: 16px; border-collapse: separate; border-spacing: 0; table-layout: fixed; }
tr { height: 17px; }
th, td { font-weight: normal; text-align: left; padding: 0; height: 16px; line-height: 16px; border-bottom: 1px solid #e0e0e0; white-space: nowrap; }
th { width: 84px; padding-left: 4px; box-sizing: border-box; }
td { position: relative; background: #fff; padding-left: 1px; }
.locked td { background: none; }
.active th { background: #316ac5; color: #fff; }
td i { display: inline-block; }
td .swatch { width: 10px; height: 9px; background: #000; margin: 0 5px 0 2px; }
td .line { width: 23px; height: 1px; background: #000; margin: 0 4px; vertical-align: 3px; }
.pop { position: absolute; left: -2px; top: 0; z-index: 4; line-height: 13px; }
.tip { display: block; width: max-content; border: 1px solid #000; background: #ffffe1; height: 16px; line-height: 16px; padding: 0 1px; }
.pop ul { width: 68px; border: 1px solid #000; background: #fff; overflow: hidden; }
.pop li { height: 13px; padding-left: 1px; }
.pop .sel { background: #316ac5; color: #fff; }
.hint { border: 1px solid #dcdcdc; padding: 1px 10px 3px 1px; }
</style>
